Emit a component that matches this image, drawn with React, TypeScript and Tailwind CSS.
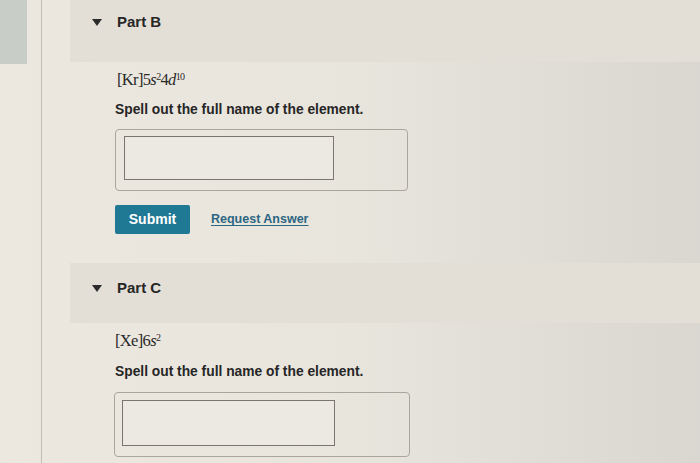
import React from "react";

function Caret() {
  return (
    <svg width="10" height="7" viewBox="0 0 10 7" className="shrink-0">
      <path d="M0 0 L10 0 L5 7 Z" fill="#2b2b2b" />
    </svg>
  );
}

function AnswerBox({ wide }: { wide?: boolean }) {
  return (
    <div
      className={
        "rounded-[4px] border border-[#aaa69e] " +
        (wide ? "w-[296px] h-[65px] px-[7px] pt-[7px]" : "w-[293px] h-[62px] px-[8px] pt-[6px]")
      }
    >
      <div
        className={
          "border border-[#7a766f] bg-[#ece9e2] " +
          (wide ? "w-[213px] h-[46px]" : "w-[210px] h-[44px]")
        }
      />
    </div>
  );
}

function Header({ label, c }: { label: string; c?: boolean }) {
  return (
    <div
      className={
        "bg-[#e3dfd7] pl-[22px] flex items-start gap-[15px] " +
        (c ? "h-[60px] pt-[16px]" : "h-[62px] pt-[13px]")
      }
    >
      <div className="pt-[6px]">
        <Caret />
      </div>
      <span className="text-[15px] leading-[18px] font-bold text-[#262626]">{label}</span>
    </div>
  );
}

const serif = { fontFamily: '"Liberation Serif", "Times New Roman", serif' };

export default function App() {
  return (
    <div
      className="w-[700px] h-[463px] overflow-hidden flex bg-gradient-to-r from-[#ece8e0] via-[#e8e5dd] to-[#d9d7d0]"
      style={{ fontFamily: '"Liberation Sans", Arial, sans-serif' }}
    >
      {/* left rail */}
      <div className="w-[42px] shrink-0 border-r border-[#c2beb6] flex flex-col">
        <div className="w-[27px] h-[64px] bg-[#c9cdc7]" />
      </div>

      {/* main */}
      <div className="flex-1 pl-[28px] flex flex-col">
        <Header label="Part B" />
        <div className="pl-[47px]">
          <div className="mt-[8px] h-[20px] leading-[20px] text-[16.5px] tracking-[-0.04em] text-[#2a2a2a]" style={serif}>
            [Kr]5<i>s</i>
            <sup className="text-[10px]">2</sup>4<i>d</i>
            <sup className="text-[10px]">10</sup>
          </div>
          <p className="mt-[12px] text-[13.8px] font-bold text-[#262626] leading-[16px] -ml-[2px]">
            Spell out the full name of the element.
          </p>
          <div className="mt-[11px] -ml-[2px]">
            <AnswerBox />
          </div>
          <div className="mt-[14px] -ml-[2px] h-[29px] flex items-center gap-[21px]">
            <button className="w-[75px] h-[29px] rounded-[2px] bg-[#1f7894] text-white text-[14px] font-bold">
              Submit
            </button>
            <a className="text-[12.5px] font-bold text-[#2c6683] underline underline-offset-2">Request Answer</a>
          </div>
        </div>

        <div className="mt-[29px]">
          <Header label="Part C" c />
        </div>
        <div className="pl-[45px]">
          <div className="mt-[8px] h-[20px] leading-[20px] text-[16.5px] tracking-[-0.04em] text-[#2a2a2a]" style={serif}>
            [Xe]6<i>s</i>
            <sup className="text-[10px]">2</sup>
          </div>
          <p className="mt-[13px] text-[13.8px] font-bold text-[#262626] leading-[16px]">
            Spell out the full name of the element.
          </p>
          <div className="mt-[12px] -ml-[1px]">
            <AnswerBox wide />
          </div>
        </div>
      </div>
    </div>
  );
}
